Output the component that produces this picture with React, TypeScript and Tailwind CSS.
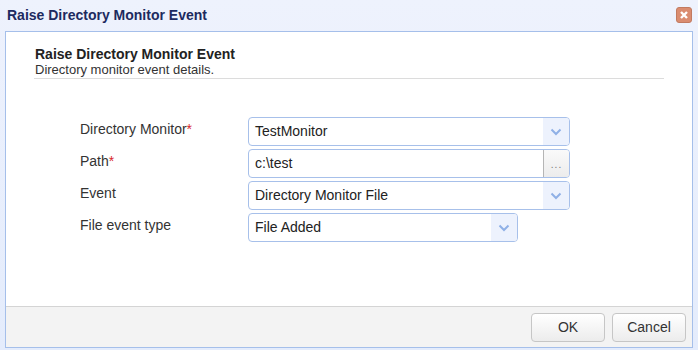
import React from "react";

const font = { fontFamily: '"Liberation Sans", Arial, sans-serif' };

const Chevron = () => (
	<svg width="12" height="8" viewBox="0 0 12 8">
		<path d="M1.5 1.5 L6 6 L10.5 1.5" fill="none" stroke="#8fb0e6" strokeWidth="2" />
	</svg>
);

interface SelectBoxProps {
	value: string;
	width: string;
}

const SelectBox = ({ value, width }: SelectBoxProps) => (
	<div className={`flex h-[29px] ${width} overflow-hidden rounded-[4px] border border-[#a7c0ea] bg-white`}>
		<div className="flex flex-1 items-center pl-[6px] text-[14px] text-[#222]">{value}</div>
		<div className="flex w-[26px] items-center justify-center bg-[#edf2fd]">
			<Chevron />
		</div>
	</div>
);

const Label = ({ text, required }: { text: string; required?: boolean }) => (
	<div className="flex h-[29px] w-[168px] items-center pb-[4px] text-[14px] text-[#333]">
		{text}
		{required && <span className="text-[#d9262c]">*</span>}
	</div>
);

export default function App() {
	return (
		<div className="flex h-[350px] w-[698px] flex-col bg-gradient-to-b from-[#eef2fd] to-[#e4ecfc]" style={font}>
			<div className="flex h-[31px] items-center justify-between pl-[7px] pr-[6px] pb-[1px]">
				<span className="text-[14px] font-bold text-[#1d2a60]">Raise Directory Monitor Event</span>
				<div className="flex h-[16px] w-[16px] items-center justify-center rounded-[3px] border border-[#c27a60] bg-[#da8c70]">
					<svg width="10" height="10" viewBox="0 0 10 10">
						<path d="M2 2 L8 8 M8 2 L2 8" stroke="#fff" strokeWidth="2.4" />
					</svg>
				</div>
			</div>
			<div className="ml-[5px] flex h-[317px] w-[688px] flex-col border border-[#a5bfea] bg-white">
				<div className="flex flex-1 flex-col px-[28px] pt-[14px]">
					<div className="border-b border-[#dcdcdc] pb-[1px] pl-px">
						<div className="text-[14px] font-bold leading-[16px] text-[#222]">Raise Directory Monitor Event</div>
						<div className="text-[13px] leading-[15px] text-[#333]">Directory monitor event details.</div>
					</div>
					<div className="mt-[38px] flex flex-col gap-[3px] pl-[46px]">
						<div className="flex">
							<Label text="Directory Monitor" required />
							<SelectBox value="TestMonitor" width="w-[322px]" />
						</div>
						<div className="flex">
							<Label text="Path" required />
							<div className="flex h-[29px] w-[322px] overflow-hidden rounded-[4px] border border-[#a7c0ea] bg-white">
								<div className="flex flex-1 items-center pl-[6px] text-[14px] text-[#222]">c:\test</div>
								<div className="flex w-[26px] items-center justify-center border-l border-[#b5b5b5] bg-gradient-to-b from-[#fafafa] to-[#ececec] pt-[2px] text-[10px] tracking-[1px] text-[#777]">
									...
								</div>
							</div>
						</div>
						<div className="flex">
							<Label text="Event" />
							<SelectBox value="Directory Monitor File" width="w-[322px]" />
						</div>
						<div className="flex">
							<Label text="File event type" />
							<SelectBox value="File Added" width="w-[270px]" />
						</div>
					</div>
				</div>
				<div className="flex h-[41px] items-center justify-end gap-[7px] border-t border-[#d4d4d4] bg-[#f3f3f3] pr-[6px]">
					<button className="h-[29px] w-[74px] rounded-[4px] border border-[#c6c6c6] bg-gradient-to-b from-[#ffffff] to-[#ececec] text-[14px] text-[#333]">
						OK
					</button>
					<button className="h-[29px] w-[74px] rounded-[4px] border border-[#c6c6c6] bg-gradient-to-b from-[#ffffff] to-[#ececec] text-[14px] text-[#333]">
						Cancel
					</button>
				</div>
			</div>
		</div>
	);
}
